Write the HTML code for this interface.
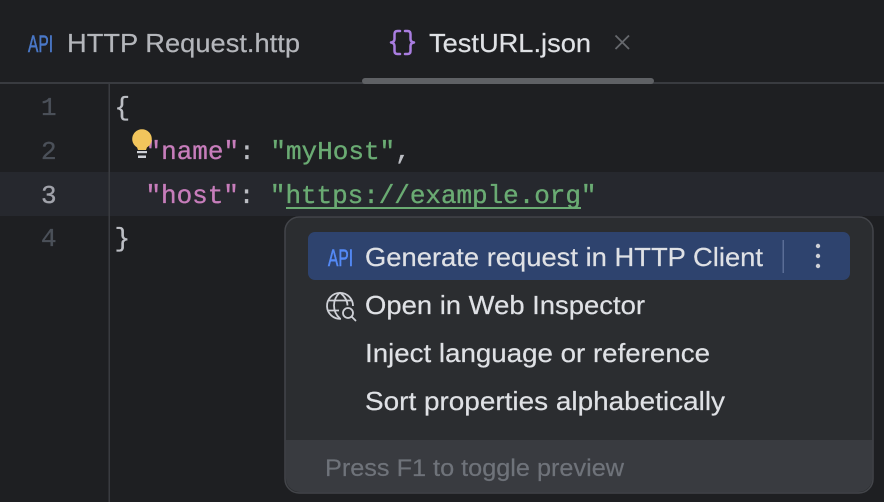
<!DOCTYPE html>
<html><head><meta charset="utf-8">
<style>
html,body{margin:0;padding:0;background:#1e1f22;width:884px;height:502px;overflow:hidden}
svg{display:block}
.s{font-family:"Liberation Sans",sans-serif;font-size:26px;stroke:currentColor;stroke-width:.2px}
.m{font-family:"Liberation Mono",monospace;font-size:26px;stroke-width:.35px}
</style></head><body>
<svg width="884" height="502" viewBox="0 0 884 502" xmlns="http://www.w3.org/2000/svg">
<rect width="884" height="502" fill="#1e1f22"/>
<!-- tab bar -->
<rect x="0" y="82" width="884" height="2" fill="#393b40"/>
<rect x="362" y="78" width="292" height="6" rx="3" fill="#5f6165"/>
<text x="28" y="52" fill="#4a78c8" stroke="#4a78c8" stroke-width=".6" textLength="25" lengthAdjust="spacingAndGlyphs" style="font-family:'Liberation Sans',sans-serif;font-size:24px">API</text>
<text x="67" y="52" class="s" color="#b4b6bb" fill="#b4b6bb" textLength="233" lengthAdjust="spacingAndGlyphs">HTTP Request.http</text>
<g fill="none" stroke="#a97de0" stroke-width="2.500" stroke-linecap="round" stroke-linejoin="round">
<path d="M400 31h-2.500q-3 0-3 3v5q0 3-3.500 3.500q3.500.5 3.500 3.500v5q0 3 3 3h2.500"/>
<path d="M405 31h2.500q3 0 3 3v5q0 3 3.500 3.500q-3.500.5-3.500 3.500v5q0 3-3 3h-2.500"/>
</g>
<text x="429" y="52" class="s" color="#dfe1e5" fill="#dfe1e5" textLength="162" lengthAdjust="spacingAndGlyphs">TestURL.json</text>
<path d="M615.500 35.500l13.500 13.500M629 35.500l-13.500 13.500" stroke="#66686d" stroke-width="1.800" fill="none"/>
<!-- editor -->
<rect x="0" y="172" width="884" height="44" fill="#26282e"/>
<rect x="108.500" y="84" width="1.500" height="418" fill="#393b40"/>
<text x="41" y="115" class="m" fill="#4b5059" stroke="#4b5059">1</text>
<text x="41" y="159" class="m" fill="#4b5059" stroke="#4b5059">2</text>
<text x="41" y="246" class="m" fill="#4b5059" stroke="#4b5059">4</text>
<text x="41" y="203" class="m" fill="#a1a3ab" stroke="#a1a3ab">3</text>
<text x="114.500" y="115" class="m" fill="#bcbec4" stroke="#bcbec4">{</text>
<text x="145.500" y="159" class="m" xml:space="preserve"><tspan fill="#c77dbb" stroke="#c77dbb">"name"</tspan><tspan fill="#bcbec4" stroke="#bcbec4">: </tspan><tspan fill="#6aab73" stroke="#6aab73">"myHost"</tspan><tspan fill="#bcbec4" stroke="#bcbec4">,</tspan></text>
<text x="145.500" y="203" class="m" xml:space="preserve" textLength="451" lengthAdjust="spacing"><tspan fill="#c77dbb" stroke="#c77dbb">"host"</tspan><tspan fill="#bcbec4" stroke="#bcbec4">: </tspan><tspan fill="#6aab73" stroke="#6aab73">"https://example.org"</tspan></text>
<rect x="286" y="207" width="295" height="2" fill="#6aab73"/>
<text x="114.500" y="246" class="m" fill="#bcbec4" stroke="#bcbec4">}</text>
<!-- bulb -->
<circle cx="142" cy="139" r="9.800" fill="#f2c55c"/>
<path d="M136.500 146h11l-1.500 4h-8z" fill="#f2c55c"/>
<rect x="137" y="151" width="10" height="2.200" fill="#ced0d6"/>
<rect x="138" y="155.500" width="8" height="2.500" fill="#ced0d6"/>
<!-- popup -->
<rect x="285" y="217" width="588" height="276" rx="14" fill="#2b2d30" stroke="#43454a" stroke-width="1.500"/>
<path d="M286 440H872.300V478a14 14 0 0 1-14 14H300a14 14 0 0 1-14-14Z" fill="#393b40"/>
<rect x="308" y="232" width="542" height="48" rx="7" fill="#2e436e"/>
<text x="328" y="266" fill="#548af7" stroke="#548af7" stroke-width=".6" textLength="25" lengthAdjust="spacingAndGlyphs" style="font-family:'Liberation Sans',sans-serif;font-size:24px">API</text>
<text x="365" y="266" class="s" color="#dfe1e5" fill="#dfe1e5" textLength="398" lengthAdjust="spacingAndGlyphs">Generate request in HTTP Client</text>
<rect x="782.500" y="240" width="1.500" height="33" fill="#5a6d96"/>
<circle cx="818" cy="246" r="2.200" fill="#ced0d6"/>
<circle cx="818" cy="256" r="2.200" fill="#ced0d6"/>
<circle cx="818" cy="266" r="2.200" fill="#ced0d6"/>
<!-- globe -->
<g fill="none" stroke="#ced0d6" stroke-width="1.800">
<path d="M353 306a13 13 0 1 0-12 12.800"/>
<path d="M340 292.500c-8 7-8 19 0 26M340 292.500c6 5 7.500 10 7.500 13"/>
<path d="M328 300.500h24M328 310.500h11"/>
<circle cx="348" cy="313" r="5"/>
<path d="M351.500 316.500l4 4" stroke-linecap="round"/>
</g>
<text x="365" y="314" class="s" color="#dfe1e5" fill="#dfe1e5" textLength="280" lengthAdjust="spacingAndGlyphs">Open in Web Inspector</text>
<text x="365" y="362" class="s" color="#dfe1e5" fill="#dfe1e5" textLength="345" lengthAdjust="spacingAndGlyphs">Inject language or reference</text>
<text x="365" y="410" class="s" color="#dfe1e5" fill="#dfe1e5" textLength="360" lengthAdjust="spacingAndGlyphs">Sort properties alphabetically</text>
<text x="325" y="476" class="s" color="#6f737a" fill="#6f737a" textLength="299" lengthAdjust="spacingAndGlyphs" style="font-size:24px">Press F1 to toggle preview</text>
</svg>
</body></html>
